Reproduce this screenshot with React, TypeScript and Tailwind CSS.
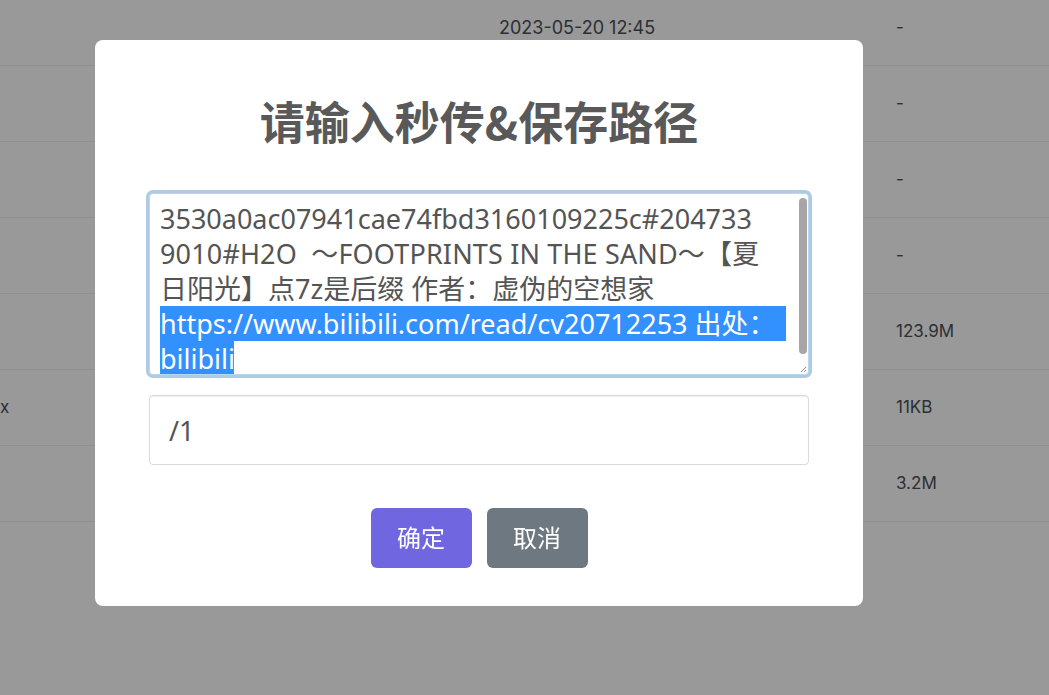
import React from "react";

const rows: { left: string; date: string; size: string }[] = [
  { left: "", date: "2023-05-20 12:45", size: "-" },
  { left: "", date: "", size: "-" },
  { left: "", date: "", size: "-" },
  { left: "", date: "", size: "-" },
  { left: "", date: "", size: "123.9M" },
  { left: "x", date: "", size: "11KB" },
  { left: "", date: "", size: "3.2M" },
];

export default function App() {
  return (
    <div
      className="relative h-[695px] w-full overflow-hidden bg-white"
      style={{ fontFamily: "'Noto Sans', 'Noto Sans CJK SC', sans-serif" }}
    >
      {/* underlying file table */}
      <div className="-mt-[10px] flex flex-col" style={{ fontFamily: "Inter, 'Noto Sans', sans-serif" }}>
        {rows.map((r, i) => (
          <div key={i} className="flex h-[76px] items-center border-b border-[#eceef2] text-[17px] text-[#4a4f57]">
            <div className="w-[499px] shrink-0">{r.left}</div>
            <div className="w-[397px] shrink-0 text-[18px]">{r.date}</div>
            <div className="flex-1">{r.size}</div>
          </div>
        ))}
      </div>

      {/* overlay */}
      <div className="fixed inset-0 flex items-start justify-start bg-black/40">
        <div className="ml-[95px] mt-[40px] flex w-[768px] flex-col rounded-[8px] bg-white pb-[38px]">
          <h2
            className="mt-[54px] h-[54px] text-center text-[45px] font-bold leading-[54px] text-[#595959]"
            style={{ fontFamily: "'Noto Sans CJK SC', 'Noto Sans', sans-serif" }}
          >
            请输入秒传&amp;保存路径
          </h2>

          {/* textarea (focused, with selection) */}
          <div className="relative mx-[54px] mt-[45px] h-[182px] overflow-hidden rounded-[4px] border border-[#b4dbed] bg-white shadow-[0_0_0_3px_rgba(100,150,200,0.5)]">
            <div className="whitespace-pre pl-[10px] pt-[7px] text-[27px] leading-[35px] text-[#545454]">
              <div className="h-[35px]">3530a0ac07941cae74fbd3160109225c#204733</div>
              <div className="h-[35px] tracking-[0.15px]">9010#H2O  ～FOOTPRINTS IN THE SAND～【夏</div>
              <div className="h-[35px]">日阳光】点7z是后缀 作者：虚伪的空想家</div>
              <div className="h-[35px]">
                <span className="inline-block h-[35px] w-[626px] overflow-hidden bg-[#3390ff] text-white">
                  https://www.bilibili.com/read/cv20712253 出处：
                </span>
              </div>
              <div className="h-[35px]">
                <span className="inline-block h-[35px] w-[74px] bg-[#3390ff] text-white">bilibili</span>
              </div>
            </div>
            {/* scrollbar thumb */}
            <div className="absolute right-[1px] top-[4px] h-[156px] w-[8px] rounded-full bg-[#a6a6a6]" />
            {/* resize grip */}
            <svg className="absolute bottom-[1px] right-[1px]" width="8" height="8" viewBox="0 0 8 8">
              <line x1="7" y1="2" x2="2" y2="7" stroke="#8a8a8a" strokeWidth="1" />
              <line x1="7" y1="5" x2="5" y2="7" stroke="#8a8a8a" strokeWidth="1" />
            </svg>
          </div>

          {/* path input */}
          <input
            readOnly
            defaultValue="/1"
            className="mx-[54px] mt-[20px] h-[70px] rounded-[4px] border border-[#d9d9d9] bg-white px-[19px] text-[27px] text-[#545454] shadow-[inset_0_1px_1px_rgba(0,0,0,0.06)] outline-none"
          />

          <div className="mt-[43px] flex justify-center gap-[15px]">
            <button className="h-[60px] w-[101px] rounded-[6px] bg-[#7066e0] text-[24px] text-white">确定</button>
            <button className="h-[60px] w-[101px] rounded-[6px] bg-[#6e7881] text-[24px] text-white">取消</button>
          </div>
        </div>
      </div>
    </div>
  );
}
